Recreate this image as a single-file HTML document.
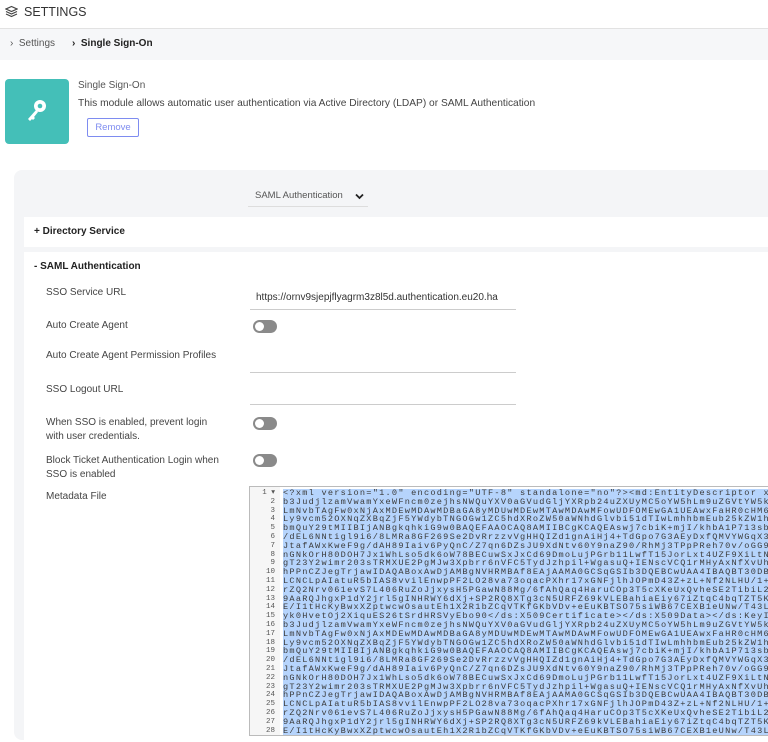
<!DOCTYPE html>
<html><head><meta charset="utf-8"><style>
*{box-sizing:border-box;margin:0;padding:0}
body{width:768px;height:736px;overflow:hidden;background:#fff;font-family:"Liberation Sans",sans-serif;color:#333;position:relative}
.abs{position:absolute}
.lbl{position:absolute;left:46px;font-size:10px;color:#444;line-height:14px}
.tog{position:absolute;left:253px;width:24px;height:13px;border-radius:7px;background:#8a8a8a}
.tog::after{content:"";position:absolute;left:2px;top:2px;width:9px;height:9px;border-radius:50%;background:#fff}
.line{position:absolute;left:250px;width:266px;border-bottom:1px solid #ccc}
.ed{position:absolute;left:249px;top:486px;width:530px;height:250px;border:1px solid #bbb;overflow:hidden;background:#fff;font-family:"Liberation Mono",monospace;font-size:8.6px}
.gut{position:absolute;left:0;top:0;width:30px;height:100%;background:#f6f6f6}
.sel{position:absolute;left:33px;top:2px;width:500px;height:250px;background:#b6d4fc}
.row{position:absolute;left:0;height:8.8px;line-height:8.8px;white-space:pre}
.n{position:absolute;width:25px;text-align:right;color:#555;font-size:7.5px;letter-spacing:0}
.c{position:absolute;left:33px;color:#3b3b3b;letter-spacing:1.25px}
</style></head><body>
<svg class="abs" style="left:5px;top:5px" width="13" height="13" viewBox="0 0 13 13" fill="none" stroke="#444" stroke-width="1.2"><path d="M6.5 1.5L12 4 6.5 6.5 1 4z"/><path d="M1 6.5l5.5 2.5L12 6.5"/><path d="M1 9l5.5 2.5L12 9"/></svg>
<div class="abs" style="left:24px;top:5px;font-size:12.5px;color:#333">SETTINGS</div>
<div class="abs" style="left:0;top:28px;width:768px;height:32px;background:#f6f7f9;border-top:1px solid #e2e2e2"></div>
<div class="abs" style="left:10px;top:38px;font-size:10px;color:#555">›&nbsp;&nbsp;Settings</div>
<div class="abs" style="left:72px;top:38px;font-size:10px;color:#222;font-weight:bold">›&nbsp;&nbsp;Single Sign-On</div>
<div class="abs" style="left:5px;top:79px;width:64px;height:65px;background:#44bfb8;border-radius:4px"></div>
<svg class="abs" style="left:25px;top:98px" width="24" height="26" viewBox="0 0 24 26"><circle cx="15" cy="8" r="6" fill="#fff"/><circle cx="15" cy="8" r="2.3" fill="#44bfb8"/><path d="M11 12L3 21l2 2 2-2 1 1 2-2-1-1 4-5z" fill="#fff"/></svg>
<div class="abs" style="left:78px;top:80px;font-size:10px;color:#555">Single Sign-On</div>
<div class="abs" style="left:78px;top:98px;font-size:10.2px;color:#444">This module allows automatic user authentication via Active Directory (LDAP) or SAML Authentication</div>
<div class="abs" style="left:87px;top:118px;width:52px;height:19px;border:1px solid #7e8cf0;border-radius:2px;font-size:9.5px;color:#7e8cf0;text-align:center;line-height:17px">Remove</div>
<div class="abs" style="left:14px;top:170px;width:760px;height:570px;background:#f4f5f7;border-radius:8px"></div>
<div class="abs" style="left:255px;top:190px;font-size:9.5px;color:#555">SAML Authentication</div>
<svg class="abs" style="left:355px;top:193px" width="9" height="7" viewBox="0 0 9 7"><path d="M1 1.5l3.5 3.5 3.5-3.5" stroke="#222" stroke-width="1.8" fill="none"/></svg>
<div class="abs" style="left:248px;top:206px;width:120px;border-bottom:1px solid #ddd"></div>
<div class="abs" style="left:24px;top:217px;width:744px;height:30px;background:#fff"></div>
<div class="abs" style="left:34px;top:226px;font-size:10px;font-weight:bold;color:#222">+ Directory Service</div>
<div class="abs" style="left:24px;top:252px;width:744px;height:490px;background:#fff"></div>
<div class="abs" style="left:34px;top:261px;font-size:10px;font-weight:bold;color:#222">- SAML Authentication</div>
<div class="lbl" style="top:286px">SSO Service URL</div>
<div class="abs" style="left:256px;top:292px;font-size:10px;color:#333">https://ornv9sjepjflyagrm3z8l5d.authentication.eu20.ha</div>
<div class="line" style="top:309px"></div>
<div class="lbl" style="top:319px">Auto Create Agent</div>
<div class="tog" style="top:320px"></div>
<div class="lbl" style="top:349px">Auto Create Agent Permission Profiles</div>
<div class="line" style="top:372px"></div>
<div class="lbl" style="top:383px">SSO Logout URL</div>
<div class="line" style="top:404px"></div>
<div class="lbl" style="top:416px">When SSO is enabled, prevent login<br>with user credentials.</div>
<div class="tog" style="top:417px"></div>
<div class="lbl" style="top:454px">Block Ticket Authentication Login when<br>SSO is enabled</div>
<div class="tog" style="top:454px"></div>
<div class="lbl" style="top:490px">Metadata File</div>
<div class="ed"><div class="gut"></div><div class="sel"></div>
<div id="rows"></div>
</div>
<script>
var L=['<?xml version="1.0" encoding="UTF-8" standalone="no"?><md:EntityDescriptor xmlns:md="urn:oasis:names:tc',
'b3JudjlzamVwamYxeWFncm0zejhsNWQuYXV0aGVudGljYXRpb24uZXUyMC5oYW5hLm9uZGVtYW5k',
'LmNvbTAgFw0xNjAxMDEwMDAwMDBaGA8yMDUwMDEwMTAwMDAwMFowUDFOMEwGA1UEAwxFaHR0cHM6',
'Ly9vcm52OXNqZXBqZjF5YWdybTNGOGw1ZC5hdXRoZW50aWNhdGlvbi51dTIwLmhhbmEub25kZW1h',
'bmQuY29tMIIBIjANBgkqhkiG9w0BAQEFAAOCAQ8AMIIBCgKCAQEAswj7cbiK+mjI/khbA1P713sb',
'/dEL6NNtigl9i6/8LMRa8GF269Se2DvRrzzvVgHHQIZd1gnAiHj4+TdGpo7G3AEyDxfQMVYWGqX3',
'JtafAWxKweF9g/dAH89Iaiv6PyQnC/Z7qn6DZsJU9XdNtv60Y9naZ90/RhMj3TPpPReh70v/oGG9',
'nGNkOrH80DOH7Jx1WhLso5dk6oW78BECuwSxJxCd69DmoLujPGrb11LwfT15JorLxt4UZF9XiLtN5',
'gT23Y2wimr203sTRMXUE2PgMJw3Xpbrr6nVFC5TydJzhpil+WgasuQ+IENscVCQ1rMHyAxNfXvUh',
'hPPnCZJegTrjawIDAQABoxAwDjAMBgNVHRMBAf8EAjAAMA0GCSqGSIb3DQEBCwUAA4IBAQBT30DB',
'LCNCLpAIatuR5bIAS8vvilEnwpPF2LO28va73oqacPXhr17xGNFjlhJOPmD43Z+zL+Nf2NLHU/1+',
'rZQ2Nrv061evS7L406RuZoJjxysH5PGawN88Mg/6fAhQaq4HaruCOp3T5cXKeUxQvheSE2TibiL2',
'9AaRQJhgxP1dY2jrl5gINHRWY6dXj+SP2RQ8XTg3cN5URFZ69kVLEBahiaEiy67iZtqC4bqTZT5K',
'E/I1tHcKyBwxXZptwcwOsautEh1X2R1bZCqVTKfGKbVDv+eEuKBTSO75siWB67CEXB1eUNw/T43L',
'yk0HvetOj2XiquES26tSrdHRSVyEbo90</ds:X509Certificate></ds:X509Data></ds:KeyInfo></ds:Signature><md:SPSSO'];
var L2=L.slice(1,15);var all=L.concat(L2).slice(0,29);
var h='';for(var i=0;i<all.length;i++){var t=all[i].replace(/&/g,'&amp;').replace(/</g,'&lt;');
h+='<div class="row" style="top:'+(2+i*8.8)+'px;width:530px"><span class="n">'+(i+1)+(i==0?' ▾':'')+'</span><span class="c">'+t+'</span></div>';}
document.getElementById('rows').innerHTML=h;
</script>
</body></html>
